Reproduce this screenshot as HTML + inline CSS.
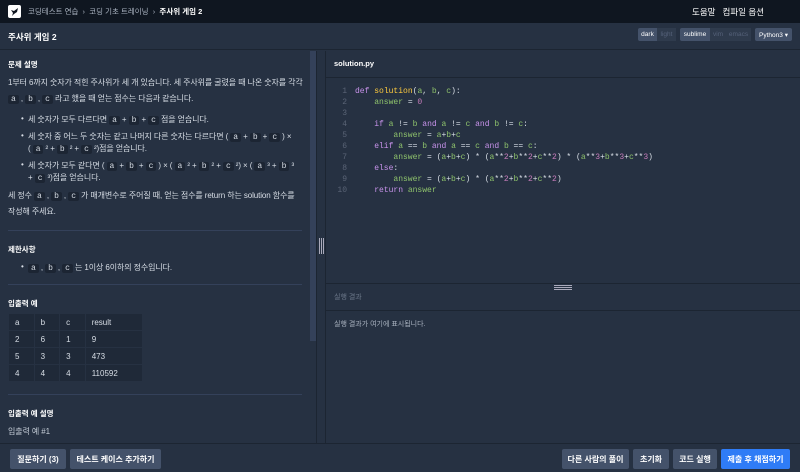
<!DOCTYPE html>
<html><head><meta charset="utf-8"><style>
*{margin:0;padding:0;box-sizing:border-box}
body{width:800px;height:472px;overflow:hidden;background:#263142;font-family:"Liberation Sans","Noto Sans CJK KR",sans-serif;color:#d8dee6;position:relative}
.abs{position:absolute}
.top{left:0;top:0;width:800px;height:23px;background:#0f1620}
.sub{left:0;top:23px;width:800px;height:27px;background:#263142;border-bottom:1px solid #1c2532}
.left{left:0;top:51px;width:310px;height:392px;background:#263142;overflow:hidden}
.k{background:#1c2533;border-radius:2px;padding:0 3px;font-family:"Liberation Mono",monospace;font-size:8px}
.t{position:absolute;left:8px;font-size:8px;white-space:nowrap;letter-spacing:-0.1px}
.h{position:absolute;left:8px;font-size:7.5px;font-weight:bold;color:#fff}
.b{position:absolute;left:28px;font-size:8px;white-space:nowrap;letter-spacing:-0.1px}
.b::before{content:"•";position:absolute;left:-7px}
.c{position:absolute;left:28px;font-size:8px;white-space:nowrap;letter-spacing:-0.1px}
.hr{position:absolute;left:8px;width:294px;height:1px;background:#34415a}
.btn{position:absolute;top:449px;height:20px;background:#44526a;color:#fff;font-size:8px;font-weight:bold;border-radius:2px;display:flex;align-items:center;justify-content:center}
.pill{position:absolute;top:28px;height:13px;font-size:6.5px;display:flex;align-items:center;justify-content:center}
td{font-size:8px;padding:0 6px;height:17px;border:1px solid #263142;background:#1f2938;color:#d8dee6}
.ln{position:absolute;left:335px;width:12px;text-align:right;color:#5a6476;font-size:8px;font-family:"Liberation Mono",monospace}
.cl{position:absolute;left:355px;font-size:8px;color:#d8dee6;white-space:pre;font-family:"Liberation Mono",monospace}
.p{color:#c792ea}.g{color:#8fc36c}.y{color:#ffcb3d}.n{color:#c77dbb}
</style></head><body>
<div class="abs top"></div>
<svg class="abs" style="left:8px;top:5px" width="13" height="13" viewBox="0 0 13 13"><rect width="13" height="13" rx="2" fill="#fff"/><path d="M3 5 L6 6 L10 3 L9 7 L6 9 L4 11 L5 8 Z" fill="#0f1620"/></svg>
<div class="abs" style="left:28px;top:6px;font-size:7.5px;color:#aab3c0">코딩테스트 연습 &nbsp;›&nbsp; 코딩 기초 트레이닝 &nbsp;›&nbsp; <b style="color:#fff">주사위 게임 2</b></div>
<div class="abs" style="left:692px;top:6px;font-size:8.5px;color:#fff">도움말 &nbsp; 컴파일 옵션</div>
<div class="abs sub"></div>
<div class="abs" style="left:8px;top:31px;font-size:8.5px;font-weight:bold;color:#fff">주사위 게임 2</div>
<div class="pill" style="left:638px;width:19px;background:#44526a;color:#fff;border-radius:2px 0 0 2px">dark</div>
<div class="pill" style="left:657px;width:19px;background:#2f3b4d;color:#56627a">light</div>
<div class="pill" style="left:680px;width:30px;background:#44526a;color:#fff;border-radius:2px 0 0 2px">sublime</div>
<div class="pill" style="left:710px;width:16px;background:#2f3b4d;color:#56627a">vim</div>
<div class="pill" style="left:726px;width:25px;background:#2f3b4d;color:#56627a">emacs</div>
<div class="pill" style="left:755px;width:37px;background:#44526a;color:#fff;border-radius:2px">Python3 ▾</div>

<div class="abs left"></div>
<div class="h" style="top:59px">문제 설명</div>
<div class="t" style="top:77px">1부터 6까지 숫자가 적힌 주사위가 세 개 있습니다. 세 주사위를 굴렸을 때 나온 숫자를 각각</div>
<div class="t" style="top:93px"><span class="k">a</span> , <span class="k">b</span> , <span class="k">c</span> 라고 했을 때 얻는 점수는 다음과 같습니다.</div>
<div class="b" style="top:114px">세 숫자가 모두 다르다면 <span class="k">a</span> + <span class="k">b</span> + <span class="k">c</span> 점을 얻습니다.</div>
<div class="b" style="top:131px">세 숫자 중 어느 두 숫자는 같고 나머지 다른 숫자는 다르다면 ( <span class="k">a</span> + <span class="k">b</span> + <span class="k">c</span> ) ×</div>
<div class="c" style="top:143px">( <span class="k">a</span> ² + <span class="k">b</span> ² + <span class="k">c</span> ²)점을 얻습니다.</div>
<div class="b" style="top:160px">세 숫자가 모두 같다면 ( <span class="k">a</span> + <span class="k">b</span> + <span class="k">c</span> ) × ( <span class="k">a</span> ² + <span class="k">b</span> ² + <span class="k">c</span> ²) × ( <span class="k">a</span> ³ + <span class="k">b</span> ³</div>
<div class="c" style="top:172px">+ <span class="k">c</span> ³)점을 얻습니다.</div>
<div class="t" style="top:190px">세 정수 <span class="k">a</span> , <span class="k">b</span> , <span class="k">c</span> 가 매개변수로 주어질 때, 얻는 점수를 return 하는 solution 함수를</div>
<div class="t" style="top:206px">작성해 주세요.</div>
<div class="hr" style="top:230px"></div>
<div class="h" style="top:244px">제한사항</div>
<div class="b" style="top:262px"><span class="k">a</span> , <span class="k">b</span> , <span class="k">c</span> 는 1이상 6이하의 정수입니다.</div>
<div class="hr" style="top:284px"></div>
<div class="h" style="top:298px">입출력 예</div>
<table class="abs" style="left:8px;top:313px;border-collapse:collapse;width:135px"><tr><td>a</td><td>b</td><td>c</td><td>result</td></tr><tr><td>2</td><td>6</td><td>1</td><td>9</td></tr><tr><td>5</td><td>3</td><td>3</td><td>473</td></tr><tr><td>4</td><td>4</td><td>4</td><td>110592</td></tr></table>
<div class="hr" style="top:394px"></div>
<div class="h" style="top:408px">입출력 예 설명</div>
<div class="t" style="top:426px;color:#c4ccd6">입출력 예 #1</div>

<div class="abs" style="left:310px;top:51px;width:6px;height:290px;background:#34415a"></div>
<div class="abs" style="left:316px;top:51px;width:10px;height:392px;background:#263142;border-left:1px solid #1c2532;border-right:1px solid #1c2532"></div>
<div class="abs" style="left:319px;top:238px;width:5px;height:16px;border-left:1px solid #aab;border-right:1px solid #aab"></div>
<div class="abs" style="left:321px;top:238px;width:1px;height:16px;background:#aab"></div>

<div class="abs" style="left:326px;top:51px;width:474px;height:27px;border-bottom:1px solid #1c2532"></div>
<div class="abs" style="left:334px;top:59px;font-size:7.5px;font-weight:bold;color:#fff">solution.py</div>
<div class="ln" style="top:87px">1</div><div class="cl" style="top:87px"><span class="p">def</span> <span class="y">solution</span>(<span class="g">a</span>, <span class="g">b</span>, <span class="g">c</span>):</div>
<div class="ln" style="top:98px">2</div><div class="cl" style="top:98px">    <span class="g">answer</span> = <span class="n">0</span></div>
<div class="ln" style="top:109px">3</div>
<div class="ln" style="top:120px">4</div><div class="cl" style="top:120px">    <span class="p">if</span> <span class="g">a</span> != <span class="g">b</span> <span class="p">and</span> <span class="g">a</span> != <span class="g">c</span> <span class="p">and</span> <span class="g">b</span> != <span class="g">c</span>:</div>
<div class="ln" style="top:131px">5</div><div class="cl" style="top:131px">        <span class="g">answer</span> = <span class="g">a</span>+<span class="g">b</span>+<span class="g">c</span></div>
<div class="ln" style="top:142px">6</div><div class="cl" style="top:142px">    <span class="p">elif</span> <span class="g">a</span> == <span class="g">b</span> <span class="p">and</span> <span class="g">a</span> == <span class="g">c</span> <span class="p">and</span> <span class="g">b</span> == <span class="g">c</span>:</div>
<div class="ln" style="top:153px">7</div><div class="cl" style="top:153px">        <span class="g">answer</span> = (<span class="g">a</span>+<span class="g">b</span>+<span class="g">c</span>) * (<span class="g">a</span>**<span class="n">2</span>+<span class="g">b</span>**<span class="n">2</span>+<span class="g">c</span>**<span class="n">2</span>) * (<span class="g">a</span>**<span class="n">3</span>+<span class="g">b</span>**<span class="n">3</span>+<span class="g">c</span>**<span class="n">3</span>)</div>
<div class="ln" style="top:164px">8</div><div class="cl" style="top:164px">    <span class="p">else</span>:</div>
<div class="ln" style="top:175px">9</div><div class="cl" style="top:175px">        <span class="g">answer</span> = (<span class="g">a</span>+<span class="g">b</span>+<span class="g">c</span>) * (<span class="g">a</span>**<span class="n">2</span>+<span class="g">b</span>**<span class="n">2</span>+<span class="g">c</span>**<span class="n">2</span>)</div>
<div class="ln" style="top:186px">10</div><div class="cl" style="top:186px">    <span class="p">return</span> <span class="g">answer</span></div>

<div class="abs" style="left:326px;top:283px;width:474px;height:1px;background:#1c2532"></div>
<div class="abs" style="left:554px;top:285px;width:18px;height:5px;border-top:1px solid #aab;border-bottom:1px solid #aab"></div>
<div class="abs" style="left:554px;top:287px;width:18px;height:1px;background:#aab"></div>
<div class="abs" style="left:334px;top:292px;font-size:7px;color:#6c788a">실행 결과</div>
<div class="abs" style="left:326px;top:310px;width:474px;height:1px;background:#1c2532"></div>
<div class="abs" style="left:334px;top:319px;font-size:7px;color:#aab3c0">실행 결과가 여기에 표시됩니다.</div>
<div class="abs" style="left:0;top:443px;width:800px;height:29px;background:#263142;border-top:1px solid #1c2532"></div>
<div class="btn" style="left:10px;width:56px">질문하기 (3)</div>
<div class="btn" style="left:70px;width:91px">테스트 케이스 추가하기</div>
<div class="btn" style="left:562px;width:67px">다른 사람의 풀이</div>
<div class="btn" style="left:633px;width:36px">초기화</div>
<div class="btn" style="left:673px;width:44px">코드 실행</div>
<div class="btn" style="left:721px;width:69px;background:#2f7cf6">제출 후 채점하기</div>
</body></html>
